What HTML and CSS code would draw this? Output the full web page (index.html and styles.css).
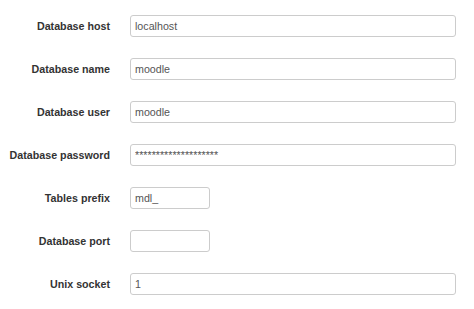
FILE: index.html
```html
<!DOCTYPE html>
<html>
<head>
<meta charset="utf-8">
<link rel="stylesheet" href="styles.css">
</head>
<body>
<form class="form">
  <label class="label" for="h">Database host</label>
  <div class="field"><input id="h" class="input" type="text" value="localhost"></div>
  <label class="label" for="n">Database name</label>
  <div class="field"><input id="n" class="input" type="text" value="moodle"></div>
  <label class="label" for="u">Database user</label>
  <div class="field"><input id="u" class="input" type="text" value="moodle"></div>
  <label class="label" for="p">Database password</label>
  <div class="field"><input id="p" class="input" type="text" value="********************"></div>
  <label class="label" for="t">Tables prefix</label>
  <div class="field"><input id="t" class="input input-short" type="text" value="mdl_"></div>
  <label class="label" for="o">Database port</label>
  <div class="field"><input id="o" class="input input-short" type="text" value=""></div>
  <label class="label" for="s">Unix socket</label>
  <div class="field"><input id="s" class="input" type="text" value="1"></div>
</form>
</body>
</html>
```
FILE: styles.css
```css
html, body {
  margin: 0;
  padding: 0;
  background: #ffffff;
}
body {
  font-family: "Liberation Sans", Arial, sans-serif;
  padding: 15px 18px 0 0;
}
.form {
  display: grid;
  grid-template-columns: 110px 1fr;
  column-gap: 20px;
  row-gap: 21px;
  align-items: center;
}
.label {
  text-align: right;
  font-weight: bold;
  font-size: 10.7px;
  color: #333333;
  white-space: nowrap;
}
.field {
  display: flex;
}
.input {
  box-sizing: border-box;
  width: 100%;
  height: 22px;
  margin: 0;
  padding: 0 4px;
  border: 1px solid #cccccc;
  border-radius: 3px;
  font-family: "Liberation Sans", Arial, sans-serif;
  font-size: 10.7px;
  color: #555555;
  background: #ffffff;
  outline: none;
}
.input-short {
  width: 80px;
}
```
